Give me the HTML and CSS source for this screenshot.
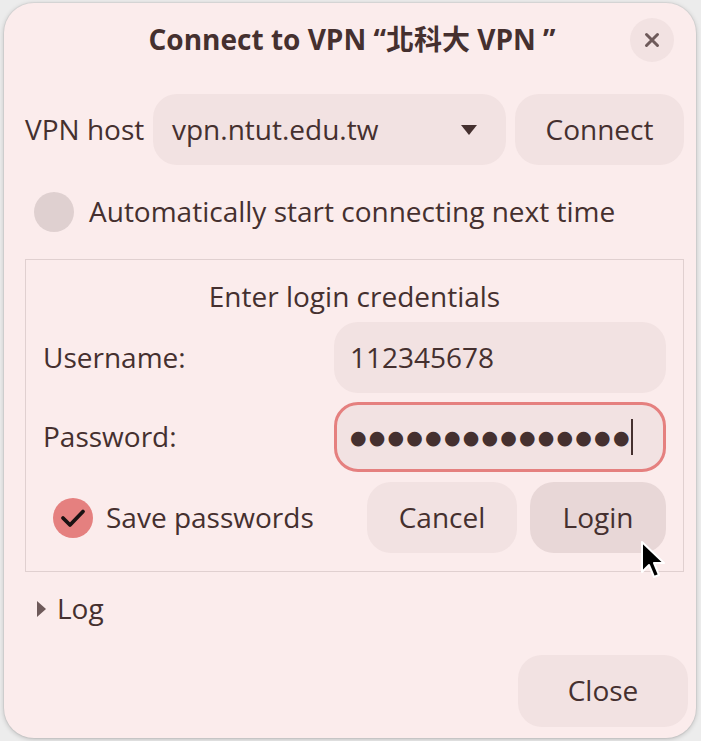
FILE: index.html
```html
<!DOCTYPE html>
<html>
<head>
<meta charset="utf-8">
<link rel="stylesheet" href="styles.css">
</head>
<body>
<div class="window">
  <div class="header">
    <div class="title">Connect to VPN “北科大 VPN ”</div>
    <button class="close-x" aria-label="Close">
      <svg width="16" height="16" viewBox="0 0 16 16"><path d="M2.5 2.5 L13.5 13.5 M13.5 2.5 L2.5 13.5" stroke="#6e5a5a" stroke-width="3" stroke-linecap="round"/></svg>
    </button>
  </div>
  <div class="content">
    <div class="host-row">
      <span class="label">VPN host</span>
      <div class="combo">
        <span>vpn.ntut.edu.tw</span>
        <svg class="arrow" width="18" height="12" viewBox="0 0 18 12"><path d="M1 1 H17 L9 11 Z" fill="#45302f"/></svg>
      </div>
      <button class="btn connect">Connect</button>
    </div>
    <div class="check-row auto">
      <span class="check"></span>
      <span class="label">Automatically start connecting next time</span>
    </div>
    <div class="frame">
      <div class="frame-title">Enter login credentials</div>
      <div class="field-row">
        <span class="label">Username:</span>
        <div class="entry">112345678</div>
      </div>
      <div class="field-row">
        <span class="label">Password:</span>
        <div class="entry focused"><span class="dots">●●●●●●●●●●●●●●●</span><span class="caret"></span></div>
      </div>
      <div class="action-row">
        <div class="check-row save">
          <span class="check checked">
            <svg width="28" height="22" viewBox="0 0 28 22"><path d="M4 11 L11 18 L24 4.5" fill="none" stroke="#1a1212" stroke-width="3.8" stroke-linecap="round" stroke-linejoin="round"/></svg>
          </span>
          <span class="label">Save passwords</span>
        </div>
        <div class="buttons">
          <button class="btn cancel">Cancel</button>
          <button class="btn login">Login</button>
        </div>
      </div>
    </div>
    <div class="expander">
      <svg width="9" height="16" viewBox="0 0 9 16"><path d="M0 0 L9 8 L0 16 Z" fill="#6e5a5a"/></svg>
      <span class="label">Log</span>
    </div>
    <div class="footer">
      <button class="btn close">Close</button>
    </div>
  </div>
  <svg class="pointer" width="30" height="42" viewBox="0 0 30 42"><path d="M2 2 L2 32 L9 25 L14 37 L19 35 L14 23 L24 23 Z" fill="#000" stroke="#fff" stroke-width="2" stroke-linejoin="round"/></svg>
</div>
</body>
</html>
```
FILE: styles.css
```css
* { box-sizing: border-box; }
html, body { margin: 0; padding: 0; }
body {
  background: #ececec;
  width: 701px;
  height: 741px;
  overflow: hidden;
  font-family: "Open Sans", "Noto Sans CJK TC", sans-serif;
  font-size: 28px;
  line-height: 1.2;
  color: #45302f;
}
.window {
  position: relative;
  margin: 3px 0 0 4px;
  width: 692px;
  height: 735px;
  background: #fbecec;
  border-radius: 30px;
  box-shadow: 0 1px 5px rgba(0,0,0,0.22), 0 0 0 1px rgba(0,0,0,0.04);
  display: flex;
  flex-direction: column;
}
.header {
  height: 80px;
  display: flex;
  align-items: center;
  justify-content: center;
  position: relative;
}
.title {
  font-weight: 700;
  font-size: 28px;
  margin-left: 4px;
  margin-bottom: 6px;
}
.close-x {
  position: absolute;
  right: 22px;
  top: 15px;
  width: 44px;
  height: 44px;
  border-radius: 50%;
  border: none;
  background: #f2e2e2;
  display: flex;
  align-items: center;
  justify-content: center;
  padding: 0;
}
button {
  font: inherit;
  color: inherit;
}
.content {
  padding: 11px 12px 0 21px;
  display: flex;
  flex-direction: column;
  flex: 1;
}
.host-row {
  display: flex;
  align-items: center;
  height: 71px;
}
.host-row .label { width: 128px; }
.combo {
  width: 353px;
  height: 71px;
  border-radius: 24px;
  background: #f2e2e2;
  display: flex;
  align-items: center;
  justify-content: space-between;
  padding: 0 28px 0 19px;
}
.btn {
  border: none;
  border-radius: 24px;
  background: #f2e2e2;
  height: 71px;
  padding: 0;
}
.connect { width: 169px; margin-left: 9px; }
.check-row {
  display: flex;
  align-items: center;
}
.auto { margin-top: 27px; margin-left: 9px; height: 40px; }
.check {
  width: 40px;
  height: 40px;
  border-radius: 50%;
  background: #dfd0d0;
  margin-right: 15px;
  display: flex;
  align-items: center;
  justify-content: center;
  flex: none;
}
.check.checked { background: #e5807f; margin-right: 13px; }
.frame {
  margin-top: 27px;
  border: 1px solid #e0d0d0;
  height: 313px;
  padding: 17px 17px 0 17px;
  display: flex;
  flex-direction: column;
}
.frame-title {
  text-align: center;
  height: 40px;
  line-height: 38px;
  margin-bottom: 5px;
}
.field-row {
  display: flex;
  align-items: center;
  justify-content: space-between;
  margin-bottom: 9px;
}
.entry {
  width: 332px;
  height: 71px;
  border-radius: 24px;
  background: #f2e2e2;
  display: flex;
  align-items: center;
  padding: 0 16px;
}
.entry.focused {
  height: 70px;
  border: 3px solid #e5807f;
  padding: 0 13px;
}
.dots {
  font-family: "DejaVu Sans", sans-serif;
  font-size: 19px;
  letter-spacing: 2.2px;
}
.caret {
  display: inline-block;
  width: 2px;
  height: 36px;
  background: #45302f;
  margin-left: -1px;
}
.action-row {
  display: flex;
  align-items: center;
  justify-content: space-between;
  margin-top: 1px;
}
.save { margin-left: 10px; }
.buttons { display: flex; gap: 13px; }
.cancel { width: 150px; }
.login { width: 136px; background: #e8d7d7; }
.expander {
  display: flex;
  align-items: center;
  height: 40px;
  margin-top: 17px;
  margin-left: 12px;
}
.expander svg { margin-right: 11px; }
.footer {
  display: flex;
  justify-content: flex-end;
  margin-top: 26px;
  margin-right: -4px;
}
.close { width: 170px; height: 72px; }
.pointer {
  position: absolute;
  left: 636px;
  top: 537px;
}
```
